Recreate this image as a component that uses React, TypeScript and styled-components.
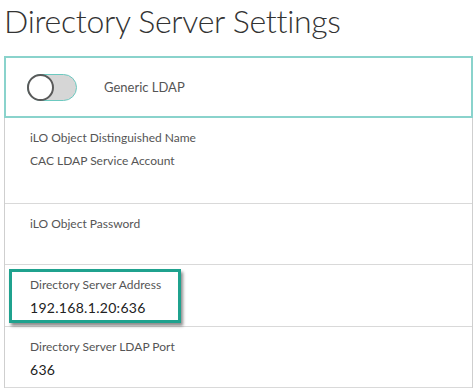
import styled, { createGlobalStyle } from "styled-components";

const GlobalStyle = createGlobalStyle`
  body {
    margin: 0;
    background: #fff;
    font-family: Lato, "Open Sans", sans-serif;
  }
`;

const Page = styled.div`
  width: 476px;
  height: 390px;
  overflow: hidden;
`;

const Title = styled.h1`
  margin: 0;
  padding: 1px 0 0 4px;
  height: 56px;
  box-sizing: border-box;
  font-size: 32px;
  font-weight: 300;
  color: #333;
  letter-spacing: -0.3px;
`;

const Card = styled.div`
  margin-left: 4px;
  width: 469px;
  border-left: 1px solid #cfcfcf;
  border-right: 1px solid #cfcfcf;
  box-sizing: border-box;
`;

const ToggleRow = styled.div`
  height: 62px;
  margin-left: -1px;
  margin-right: -1px;
  border: 2px solid #8ad3cc;
  box-sizing: border-box;
  display: flex;
  align-items: center;
  padding-left: 21px;
  gap: 27px;
`;

const Track = styled.div`
  width: 50px;
  height: 27px;
  border-radius: 14px;
  background: #d6d6d6;
  border: 1px solid #6cc9c0;
  box-sizing: border-box;
  display: flex;
  align-items: center;
`;

const Knob = styled.div`
  width: 27px;
  height: 27px;
  margin-left: -1px;
  border-radius: 50%;
  background: #fff;
  border: 2.5px solid #5a5a5a;
  box-sizing: border-box;
`;

const ToggleLabel = styled.span`
  font-size: 13px;
  color: #555;
`;

const Field = styled.div<{ $h: number }>`
  position: relative;
  height: ${(p) => p.$h}px;
  border-bottom: 1px solid #d9d9d9;
  box-sizing: border-box;
  padding: 12px 0 0 25px;
`;

const Label = styled.div`
  font-size: 12px;
  line-height: 16px;
  color: #555;
`;

const Value = styled.div<{ $big?: boolean }>`
  margin-top: ${(p) => (p.$big ? 5 : 7)}px;
  font-size: ${(p) => (p.$big ? 14 : 12)}px;
  line-height: ${(p) => (p.$big ? 20 : 16)}px;
  color: ${(p) => (p.$big ? "#222" : "#555")};
  letter-spacing: ${(p) => (p.$big ? "0.3px" : "0")};
`;

const Highlight = styled.div`
  position: absolute;
  left: 4px;
  top: 4px;
  width: 172px;
  height: 54px;
  border: 3.5px solid #1fa28e;
  box-sizing: border-box;
  box-shadow: 2px 3px 3px rgba(0, 0, 0, 0.45);
`;

export default function App() {
  return (
    <Page>
      <GlobalStyle />
      <Title>Directory Server Settings</Title>
      <Card>
        <ToggleRow>
          <Track>
            <Knob />
          </Track>
          <ToggleLabel>Generic LDAP</ToggleLabel>
        </ToggleRow>
        <Field $h={86}>
          <Label>iLO Object Distinguished Name</Label>
          <Value>CAC LDAP Service Account</Value>
        </Field>
        <Field $h={61}>
          <Label>iLO Object Password</Label>
        </Field>
        <Field $h={62}>
          <Highlight />
          <Label>Directory Server Address</Label>
          <Value $big>192.168.1.20:636</Value>
        </Field>
        <Field $h={61}>
          <Label>Directory Server LDAP Port</Label>
          <Value $big>636</Value>
        </Field>
      </Card>
    </Page>
  );
}
